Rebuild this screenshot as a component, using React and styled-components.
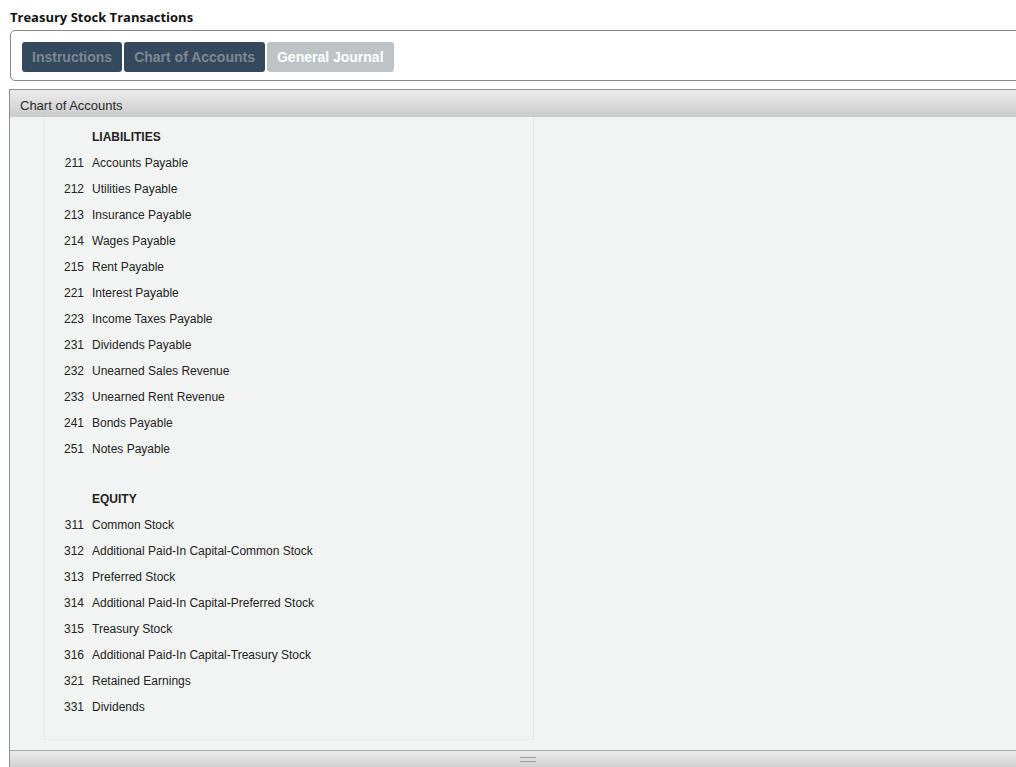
import React from 'react';
import styled, {createGlobalStyle} from 'styled-components';

const GlobalStyle = createGlobalStyle`
  html, body {
    margin: 0;
    padding: 0;
    background: #fff;
    overflow: hidden;
  }
`;

const liabilities = [
    ['211', 'Accounts Payable'],
    ['212', 'Utilities Payable'],
    ['213', 'Insurance Payable'],
    ['214', 'Wages Payable'],
    ['215', 'Rent Payable'],
    ['221', 'Interest Payable'],
    ['223', 'Income Taxes Payable'],
    ['231', 'Dividends Payable'],
    ['232', 'Unearned Sales Revenue'],
    ['233', 'Unearned Rent Revenue'],
    ['241', 'Bonds Payable'],
    ['251', 'Notes Payable'],
];

const equity = [
    ['311', 'Common Stock'],
    ['312', 'Additional Paid-In Capital-Common Stock'],
    ['313', 'Preferred Stock'],
    ['314', 'Additional Paid-In Capital-Preferred Stock'],
    ['315', 'Treasury Stock'],
    ['316', 'Additional Paid-In Capital-Treasury Stock'],
    ['321', 'Retained Earnings'],
    ['331', 'Dividends'],
];

const Section = ({title, items}) => (
    <>
        <Row>
            <Num/>
            <Heading>{title}</Heading>
        </Row>
        {items.map(([num, name]) => (
            <Row key={num}>
                <Num>{num}</Num>
                <Name>{name}</Name>
            </Row>
        ))}
    </>
);

const App = () => (
    <Page>
        <GlobalStyle/>
        <Title>Treasury Stock Transactions</Title>

        <Toolbar>
            <TabButton>Instructions</TabButton>
            <TabButton>Chart of Accounts</TabButton>
            <TabButton disabled>General Journal</TabButton>
        </Toolbar>

        <Panel>
            <PanelHeader>Chart of Accounts</PanelHeader>

            <PanelBody>
                <Accounts>
                    <Section title="LIABILITIES" items={liabilities}/>
                    <Spacer/>
                    <Section title="EQUITY" items={equity}/>
                </Accounts>
            </PanelBody>

            <PanelFooter>
                <Grip/>
            </PanelFooter>
        </Panel>
    </Page>
);

const Page = styled.div`
  width: 1040px;
  padding-top: 8px;
  font-family: "Liberation Sans", Arial, sans-serif;
`;

const Title = styled.div`
  padding-left: 10px;
  font-family: "Open Sans", "Liberation Sans", sans-serif;
  font-weight: 700;
  font-size: 13px;
  line-height: 18px;
  color: #111;
`;

const Toolbar = styled.div`
  display: flex;
  gap: 2px;
  margin: 4px 0 0 10px;
  padding: 11px 11px 8px;
  border: 1px solid #8a8a8a;
  border-radius: 5px;
`;

const TabButton = styled.button`
  height: 30px;
  padding: 0 10px;
  border: none;
  border-radius: 3px;
  background: ${({disabled}) => (disabled ? '#bdc3c7' : '#34495e')};
  color: ${({disabled}) => (disabled ? '#ffffff' : '#7c8893')};
  font-family: "Liberation Sans", Arial, sans-serif;
  font-weight: 700;
  font-size: 14px;
`;

const Panel = styled.div`
  margin: 8px 0 0 9px;
  border: 1px solid #8f8f8f;
  border-right: none;
  display: flex;
  flex-direction: column;
`;

const PanelHeader = styled.div`
  height: 27px;
  box-sizing: border-box;
  padding: 3px 0 0 10px;
  display: flex;
  align-items: center;
  background: linear-gradient(#ececec, #cacaca);
  font-size: 13px;
  color: #2a2a2a;
`;

const PanelBody = styled.div`
  height: 633px;
  padding-left: 34px;
  background: #f2f4f3;
`;

const Accounts = styled.div`
  width: 488px;
  height: 615px;
  padding-top: 7px;
  border: 1px solid #e6e9e8;
  border-top: none;
`;

const Row = styled.div`
  display: flex;
  align-items: center;
  height: 26px;
  font-size: 12px;
  color: #222;
`;

const Num = styled.span`
  width: 39px;
  text-align: right;
`;

const Name = styled.span`
  margin-left: 8px;
`;

const Heading = styled.span`
  margin-left: 8px;
  font-weight: 700;
`;

const Spacer = styled.div`
  height: 24px;
`;

const PanelFooter = styled.div`
  height: 16px;
  border-top: 1px solid #a9a9a9;
  background: linear-gradient(#ececec, #d0d0d0);
  display: flex;
  align-items: center;
  padding-left: 510px;
`;

const Grip = styled.div`
  width: 16px;
  height: 3px;
  border-top: 1px solid #a0a0a0;
  border-bottom: 1px solid #a0a0a0;
`;

export default App;
